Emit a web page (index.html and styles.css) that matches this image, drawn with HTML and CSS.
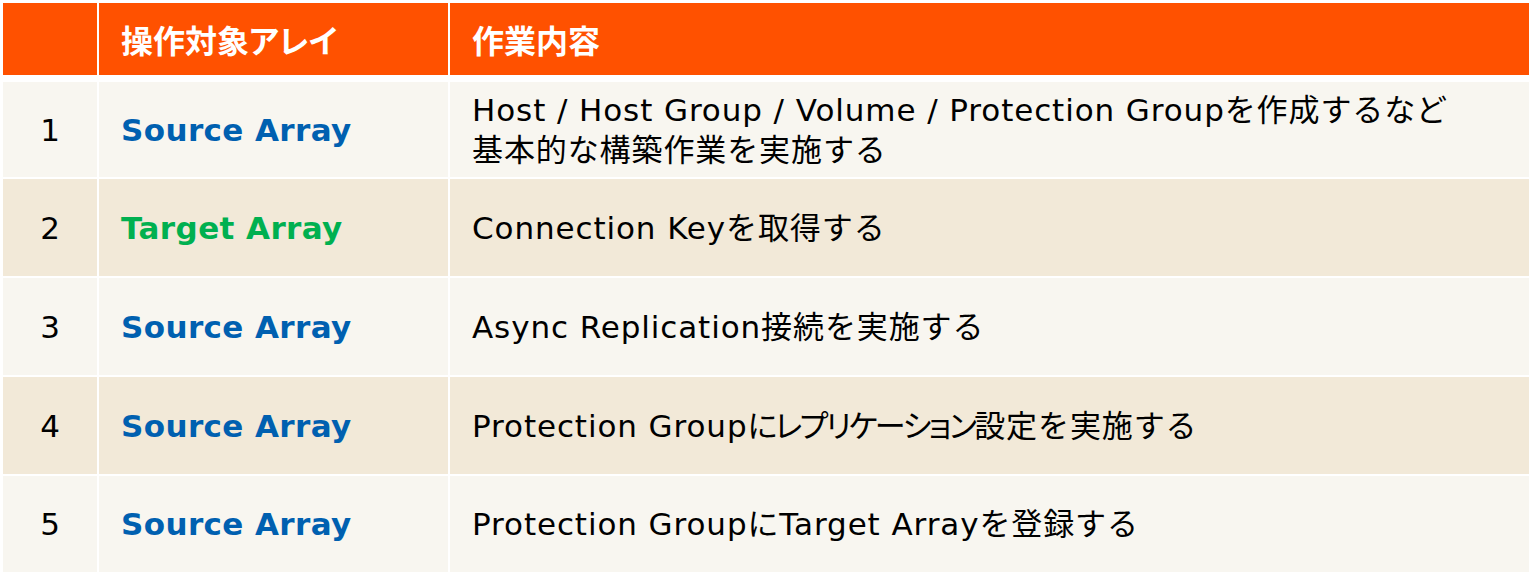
FILE: index.html
```html
<!DOCTYPE html>
<html lang="ja">
<head>
<meta charset="utf-8">
<link rel="stylesheet" href="styles.css">
</head>
<body>
<div class="table">
  <div class="row head-row">
    <div class="cell head"></div>
    <div class="cell head text">操作対象<span class="kana">アレイ</span></div>
    <div class="cell head text">作業内容</div>
  </div>
  <div class="body">
    <div class="row odd r95">
      <div class="cell num">1</div>
      <div class="cell text src">Source Array</div>
      <div class="cell text desc"><span class="line">Host / Host Group / Volume / Protection Groupを作成するなど<br>基本的な構築作業を実施する</span></div>
    </div>
    <div class="row even">
      <div class="cell num">2</div>
      <div class="cell text tgt">Target Array</div>
      <div class="cell text desc"><span class="line">Connection Keyを取得する</span></div>
    </div>
    <div class="row odd">
      <div class="cell num">3</div>
      <div class="cell text src">Source Array</div>
      <div class="cell text desc"><span class="line">Async Replication接続を実施する</span></div>
    </div>
    <div class="row even">
      <div class="cell num">4</div>
      <div class="cell text src">Source Array</div>
      <div class="cell text desc"><span class="line">Protection Group<span class="kana tight">にレプリケーション</span>設定を実施する</span></div>
    </div>
    <div class="row odd r96">
      <div class="cell num">5</div>
      <div class="cell text src">Source Array</div>
      <div class="cell text desc"><span class="line">Protection GroupにTarget Arrayを登録する</span></div>
    </div>
  </div>
</div>
</body>
</html>
```
FILE: styles.css
```css
html, body {
  margin: 0;
  padding: 0;
  background: #ffffff;
}
body {
  font-family: "DejaVu Sans", "Noto Sans CJK JP", sans-serif;
  color: #000000;
}
.table {
  padding: 3px 0 0 3px;
  width: 1526px;
}
.row {
  display: grid;
  grid-template-columns: 94px 349px 1079px;
  column-gap: 2px;
  height: 97px;
}
.head-row {
  height: 72px;
}
.body {
  display: flex;
  flex-direction: column;
  row-gap: 2px;
  margin-top: 7px;
}
.r95 { height: 95px; }
.r96 { height: 96px; }
.cell {
  display: flex;
  align-items: center;
  font-size: 31px;
  line-height: 40px;
  letter-spacing: 0.9px;
}
.head {
  background: #ff5100;
  color: #ffffff;
  font-weight: bold;
  font-family: "Noto Sans CJK JP", sans-serif;
  font-size: 32px;
  letter-spacing: 0;
}
.line {
  display: block;
}
.kana {
  font-feature-settings: "palt";
  letter-spacing: 0;
}
.kana.tight {
  letter-spacing: -2.5px;
}
.text {
  padding-left: 22px;
}
.num {
  justify-content: center;
  letter-spacing: 0;
}
.odd .cell { background: #f8f6f0; }
.even .cell { background: #f2e9d8; }
.src { color: #0060b0; font-weight: bold; letter-spacing: 0.4px; }
.tgt { color: #00b050; font-weight: bold; letter-spacing: 0.4px; }
```
